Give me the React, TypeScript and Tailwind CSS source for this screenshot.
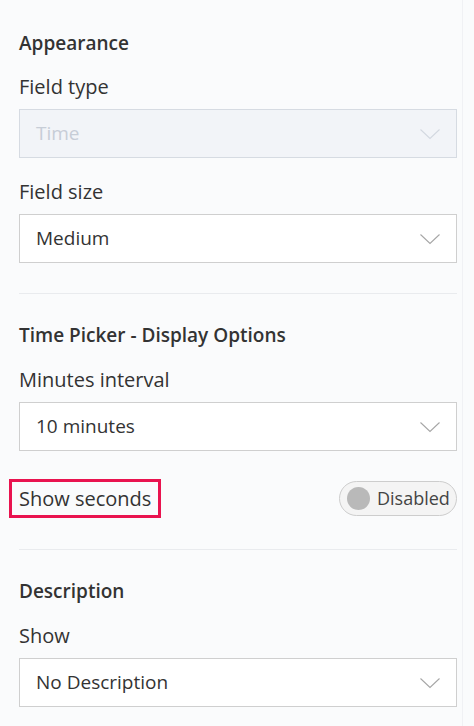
import React from "react";

const FONT = { fontFamily: "'Open Sans', Lato, Arial, sans-serif" };

function Chevron({ muted }: { muted?: boolean }) {
  return (
    <svg width="22" height="12" viewBox="0 0 22 12" fill="none" className="shrink-0">
      <path
        d="M1.5 1.5l9.5 9L20.5 1.5"
        stroke={muted ? "#d3d8e0" : "#a6a6a6"}
        strokeWidth="1.1"
      />
    </svg>
  );
}

function Select({ value, disabled }: { value: string; disabled?: boolean }) {
  return (
    <div
      className={`flex h-[49px] items-center justify-between border pl-[16px] pr-[15px] text-[19px] ${
        disabled
          ? "border-[#d6dbe2] bg-[#f2f4f8] text-[#c7cdd7]"
          : "border-[#cfcfcf] bg-white text-[#333]"
      }`}
    >
      <span>{value}</span>
      <Chevron muted={disabled} />
    </div>
  );
}

function Heading({ children }: { children: React.ReactNode }) {
  return <h3 className="text-[19px] font-semibold leading-[24px] text-[#333]">{children}</h3>;
}

function Label({ children }: { children: React.ReactNode }) {
  return <p className="mb-[10px] text-[20px] leading-[24px] text-[#333]">{children}</p>;
}

export default function App() {
  return (
    <div className="min-h-[726px] w-[474px] bg-[#fafbfc]" style={FONT}>
      <div className="w-[463px] border-r border-[#f0f1f4] pl-[19px] pr-[5px] pt-[31px] pb-[20px]">
        <Heading>Appearance</Heading>
        <div className="mt-[20px]">
          <Label>Field type</Label>
          <Select value="Time" disabled />
        </div>
        <div className="mt-[22px]">
          <Label>Field size</Label>
          <Select value="Medium" />
        </div>

        <div className="mt-[30px] border-t border-[#e9ebee]" />

        <div className="mt-[29px]">
          <Heading>Time Picker - Display Options</Heading>
        </div>
        <div className="mt-[21px]">
          <Label>Minutes interval</Label>
          <Select value="10 minutes" />
        </div>

        <div className="mt-[28px] flex items-center justify-between">
          <span className="-ml-[10px] border-[3px] border-[#e9134f] px-[7px] py-[3px] text-[20px] leading-[27px] text-[#333]">
            Show seconds
          </span>
          <div className="flex h-[35px] w-[118px] items-center rounded-full border border-[#cdcdcd] bg-[#f4f4f4] pl-[7px]">
            <span className="h-[23px] w-[23px] shrink-0 rounded-full bg-[#b9b9b9]" />
            <span className="ml-[7px] text-[18px] text-[#444]">Disabled</span>
          </div>
        </div>

        <div className="mt-[31px] border-t border-[#e9ebee]" />

        <div className="mt-[29px]">
          <Heading>Description</Heading>
        </div>
        <div className="mt-[21px]">
          <Label>Show</Label>
          <Select value="No Description" />
        </div>
      </div>
    </div>
  );
}
